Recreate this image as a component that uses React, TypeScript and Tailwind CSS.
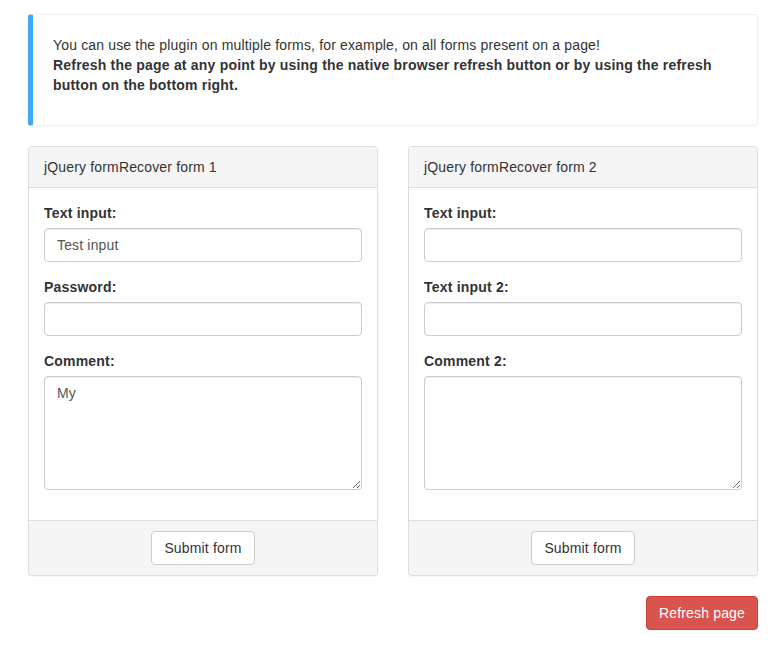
import { useState } from "react";

// Two recoverable forms under an info callout, Bootstrap 3 look.

const FONT = "font-['Liberation_Sans',Arial,Helvetica,sans-serif]";

const INPUT =
  "block w-full h-[34px] px-3 py-1.5 text-[14px] leading-5 text-[#555] bg-white border border-[#ccc] rounded shadow-[inset_0_1px_1px_rgba(0,0,0,0.075)] outline-none";

const TEXTAREA =
  "block w-full h-[114px] px-3 py-1.5 text-[14px] leading-5 text-[#555] bg-white border border-[#ccc] rounded shadow-[inset_0_1px_1px_rgba(0,0,0,0.075)] outline-none";

function Field({
  label,
  value,
  type = "text",
  multiline = false,
}: {
  label: string;
  value?: string;
  type?: string;
  multiline?: boolean;
}) {
  const [v, setV] = useState(value ?? "");
  return (
    <div className="mb-[15px]">
      <label className="block mb-[5px] font-bold leading-5 tracking-[0.2px]">{label}</label>
      {multiline ? (
        <textarea className={TEXTAREA} value={v} onChange={(e) => setV(e.target.value)} />
      ) : (
        <input className={INPUT} type={type} value={v} onChange={(e) => setV(e.target.value)} />
      )}
    </div>
  );
}

function Panel({ title, children }: { title: string; children: React.ReactNode }) {
  return (
    <div className="w-[350px] bg-white border border-[#ddd] rounded shadow-[0_1px_1px_rgba(0,0,0,0.05)]">
      <div className="px-[15px] py-2.5 leading-5 bg-[#f5f5f5] border-b border-[#ddd] rounded-t">
        {title}
      </div>
      <div className="p-[15px]">{children}</div>
      <div className="flex justify-center px-[15px] py-2.5 bg-[#f5f5f5] border-t border-[#ddd] rounded-b">
        <button className="h-[34px] px-3 leading-5 text-[#333] bg-white border border-[#ccc] rounded">
          Submit form
        </button>
      </div>
    </div>
  );
}

export default function App() {
  return (
    <div
      className={`${FONT} min-h-screen bg-white text-[14px] leading-5 tracking-[0.16px] text-[#333] pt-[14px]`}
    >
      <div className="ml-[28px] w-[730px]">
        {/* Info callout */}
        <div className="border border-[#eee] border-l-[5px] border-l-[#3fa9f5] rounded-[3px] px-5 pt-5 pb-[30px]">
          <p>
            You can use the plugin on multiple forms, for example, on all forms present on a page!
            <br />
            <b className="tracking-[0.2px]">
              Refresh the page at any point by using the native browser refresh button or by using
              the refresh button on the bottom right.
            </b>
          </p>
        </div>

        {/* Forms */}
        <div className="flex gap-[30px] mt-5">
          <Panel title="jQuery formRecover form 1">
            <Field label="Text input:" value="Test input" />
            <Field label="Password:" type="password" />
            <Field label="Comment:" value="My" multiline />
          </Panel>
          <Panel title="jQuery formRecover form 2">
            <Field label="Text input:" />
            <Field label="Text input 2:" />
            <Field label="Comment 2:" multiline />
          </Panel>
        </div>

        <div className="flex justify-end mt-5">
          <button className="h-[34px] px-3 leading-5 text-white bg-[#d9534f] border border-[#d43f3a] rounded">
            Refresh page
          </button>
        </div>
      </div>
    </div>
  );
}
